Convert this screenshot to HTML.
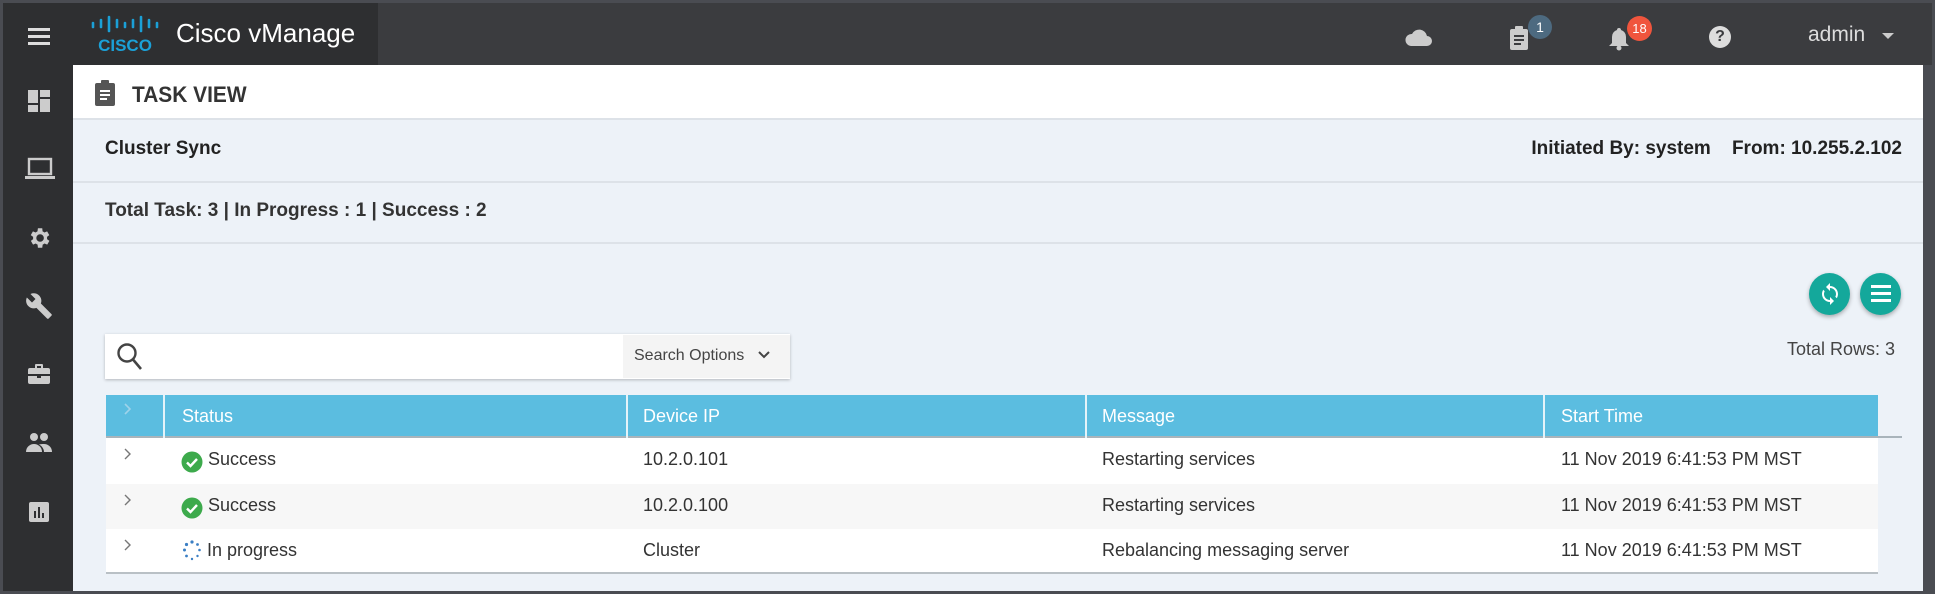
<!DOCTYPE html>
<html><head><meta charset="utf-8"><style>
*{margin:0;padding:0;box-sizing:border-box}
body{width:1935px;height:594px;background:#4a4c52;position:relative;overflow:hidden;font-family:"Liberation Sans",sans-serif;}
.abs{position:absolute}
#top{left:3px;top:3px;width:1929px;height:62px;background:#3b3c3f}
#logo{left:3px;top:3px;width:375px;height:62px;background:#2e2f31}
#side{left:3px;top:65px;width:70px;height:526px;background:#2e2f31}
#main{left:73px;top:65px;width:1850px;height:526px;background:#edf2f8}
.t{white-space:nowrap;position:absolute}
.hd{color:#fff;font-size:18px}
.cell{font-size:18px;color:#333}
</style></head><body>
<div class="abs" id="top"></div>
<div class="abs" id="logo"></div>
<div class="abs" id="side"></div>
<div class="abs" id="main"></div>
<!-- hamburger -->
<div class="abs" style="left:28px;top:28px;width:22px;height:3px;background:#ddd"></div>
<div class="abs" style="left:28px;top:35px;width:22px;height:3px;background:#ddd"></div>
<div class="abs" style="left:28px;top:42px;width:22px;height:3px;background:#ddd"></div>
<!-- cisco logo -->
<svg class="abs" style="left:90px;top:14px" width="72" height="40" viewBox="0 0 72 40">
<g stroke="#1ba0d7" stroke-width="2.6" stroke-linecap="round">
<line x1="3" y1="9" x2="3" y2="13"/><line x1="11" y1="6" x2="11" y2="13"/><line x1="19" y1="3" x2="19" y2="17"/><line x1="27" y1="6" x2="27" y2="13"/><line x1="35" y1="9" x2="35" y2="13"/><line x1="43" y1="6" x2="43" y2="13"/><line x1="51" y1="3" x2="51" y2="17"/><line x1="59" y1="6" x2="59" y2="13"/><line x1="67" y1="9" x2="67" y2="13"/></g>
<text x="35" y="37" text-anchor="middle" fill="#1ba0d7" font-family="Liberation Sans" font-weight="bold" font-size="17">CISCO</text></svg>
<div class="t" style="left:176px;top:18px;color:#fff;font-size:26px">Cisco vManage</div>
<!-- top right icons -->
<svg class="abs" style="left:1405px;top:27px" width="28" height="20" viewBox="0 0 28 20"><path d="M6 19h16a5 5 0 0 0 0-10a8 8 0 0 0-15-2a6 6 0 0 0-1 12z" fill="#ccc"/></svg>
<svg class="abs" style="left:1509px;top:26px" width="20" height="24" viewBox="0 0 20 24"><rect x="1" y="3" width="18" height="21" rx="2" fill="#ccc"/><rect x="6" y="0" width="8" height="5" rx="1" fill="#ccc"/><g fill="#3b3c3f"><rect x="5" y="9" width="10" height="2"/><rect x="5" y="13" width="10" height="2"/><rect x="5" y="17" width="7" height="2"/></g></svg>
<div class="abs" style="left:1528px;top:15px;width:24px;height:24px;border-radius:50%;background:#4d6a80;color:#fff;font-size:14px;text-align:center;line-height:24px">1</div>
<svg class="abs" style="left:1608px;top:27px" width="22" height="24" viewBox="0 0 22 24"><path d="M11 1a2 2 0 0 1 2 2a7 7 0 0 1 5 7v6l3 3H1l3-3v-6a7 7 0 0 1 5-7a2 2 0 0 1 2-2z" fill="#ccc"/><circle cx="11" cy="21" r="2.5" fill="#ccc"/></svg>
<div class="abs" style="left:1627px;top:16px;width:25px;height:25px;border-radius:50%;background:#f0553d;color:#fff;font-size:13px;text-align:center;line-height:25px">18</div>
<div class="abs" style="left:1709px;top:26px;width:22px;height:22px;border-radius:50%;background:#ddd;color:#3b3c3f;font-size:16px;font-weight:bold;text-align:center;line-height:22px">?</div>
<div class="t" style="left:1808px;top:23px;color:#ddd;font-size:21px">admin</div>
<div class="abs" style="left:1882px;top:33px;border-left:6px solid transparent;border-right:6px solid transparent;border-top:6px solid #ccc"></div>
<!-- sidebar icons -->
<svg class="abs" style="left:27px;top:89px" width="24" height="24" viewBox="0 0 24 24"><g fill="#ccc"><rect x="1" y="1" width="10" height="13"/><rect x="13" y="1" width="10" height="7"/><rect x="13" y="10" width="10" height="13"/><rect x="1" y="16" width="10" height="7"/></g></svg>
<svg class="abs" style="left:24px;top:157px" width="32" height="24" viewBox="0 0 32 24"><rect x="5" y="2" width="22" height="15" fill="none" stroke="#ccc" stroke-width="2.4"/><rect x="1" y="19" width="30" height="3" fill="#ccc"/></svg>
<svg class="abs" style="left:26px;top:225px" width="26" height="26" viewBox="0 0 24 24"><path fill="#ccc" d="M19.4 13a7.5 7.5 0 0 0 0-2l2.1-1.6-2-3.5-2.5 1a7 7 0 0 0-1.7-1L15 3h-4l-.4 2.9a7 7 0 0 0-1.7 1l-2.5-1-2 3.5L6.6 11a7.5 7.5 0 0 0 0 2l-2.1 1.6 2 3.5 2.5-1a7 7 0 0 0 1.7 1L11 21h4l.4-2.9a7 7 0 0 0 1.7-1l2.5 1 2-3.5zM13 15.5a3.5 3.5 0 1 1 0-7a3.5 3.5 0 0 1 0 7z"/></svg>
<svg class="abs" style="left:25px;top:292px" width="28" height="28" viewBox="0 0 24 24"><path fill="#ccc" d="M22.7 19l-9.1-9.1c.9-2.3.4-5-1.5-6.9-2-2-5-2.4-7.4-1.3L9 6 6 9 1.6 4.7C.4 7.1.9 10.1 2.9 12.1c1.9 1.9 4.6 2.4 6.9 1.5l9.1 9.1c.4.4 1 .4 1.4 0l2.3-2.3c.5-.4.5-1.1.1-1.4z"/></svg>
<svg class="abs" style="left:27px;top:362px" width="24" height="24" viewBox="0 0 24 24"><path fill="#ccc" d="M9 2h6a1 1 0 0 1 1 1v3h5a2 2 0 0 1 2 2v4H1V8a2 2 0 0 1 2-2h5V3a1 1 0 0 1 1-1zm1 2v2h4V4zM1 14h9v2h4v-2h9v6a2 2 0 0 1-2 2H3a2 2 0 0 1-2-2z"/></svg>
<svg class="abs" style="left:25px;top:432px" width="28" height="22" viewBox="0 0 28 22"><g fill="#ccc"><circle cx="9" cy="5" r="4"/><circle cx="19" cy="5" r="4"/><path d="M1 20c0-5 4-8 8-8s8 3 8 8z"/><path d="M14 12.5c1.5-.4 3-.5 5-.5 4 0 8 3 8 8h-8c0-3-2-6-5-7.5z"/></g></svg>
<svg class="abs" style="left:28px;top:501px" width="22" height="22" viewBox="0 0 22 22"><rect x="1" y="1" width="20" height="20" rx="2" fill="#ccc"/><g fill="#2e2f31"><rect x="6" y="10" width="2" height="7"/><rect x="10" y="6" width="2" height="11"/><rect x="14" y="12" width="2" height="5"/></g></svg>
<!-- task view header -->
<div class="abs" style="left:73px;top:65px;width:1850px;height:55px;background:#fff;border-bottom:2px solid #dde2e8"></div>
<svg class="abs" style="left:95px;top:80px" width="20" height="26" viewBox="0 0 20 26"><rect x="0" y="3" width="20" height="23" rx="2" fill="#555"/><rect x="6" y="0" width="8" height="6" rx="1" fill="#555"/><g fill="#fff"><rect x="5" y="10" width="10" height="2"/><rect x="5" y="14" width="10" height="2"/><rect x="5" y="18" width="7" height="2"/></g></svg>
<div class="t" style="left:132px;top:82px;font-size:22px;color:#333;font-weight:bold;transform:scaleX(.95);transform-origin:left">TASK VIEW</div>
<div class="abs" style="left:73px;top:181px;width:1850px;height:2px;background:#dde2e8"></div>
<div class="abs" style="left:73px;top:242px;width:1850px;height:2px;background:#dde2e8"></div>
<div class="t" style="left:105px;top:138px;font-size:19px;font-weight:bold;color:#222">Cluster Sync</div>
<div class="t" style="right:33px;top:138px;font-size:19px;font-weight:bold;color:#222">Initiated By: system &nbsp;&nbsp;&nbsp;From: 10.255.2.102</div>
<div class="t" style="left:105px;top:200px;font-size:19px;font-weight:bold;color:#333">Total Task: 3 | In Progress : 1 | Success : 2</div>
<!-- buttons -->
<div class="abs" style="left:1809px;top:273px;width:41px;height:42px;border-radius:50%;background:#14a89b;box-shadow:0 2px 4px rgba(0,0,0,.3)"></div>
<svg class="abs" style="left:1818px;top:282px" width="24" height="24" viewBox="0 0 24 24"><path fill="#fff" d="M12 4V1L8 5l4 4V6c3.3 0 6 2.7 6 6 0 1-.3 2-.7 2.8l1.5 1.5C19.5 15 20 13.6 20 12c0-4.4-3.6-8-8-8zm0 14c-3.3 0-6-2.7-6-6 0-1 .3-2 .7-2.8L5.2 7.7C4.5 9 4 10.4 4 12c0 4.4 3.6 8 8 8v3l4-4-4-4z"/></svg>
<div class="abs" style="left:1860px;top:273px;width:41px;height:42px;border-radius:50%;background:#14a89b;box-shadow:0 2px 4px rgba(0,0,0,.3)"></div>
<div class="abs" style="left:1871px;top:285px;width:20px;height:3px;background:#fff"></div>
<div class="abs" style="left:1871px;top:292px;width:20px;height:3px;background:#fff"></div>
<div class="abs" style="left:1871px;top:299px;width:20px;height:3px;background:#fff"></div>
<div class="t" style="left:1775px;top:339px;width:120px;text-align:right;font-size:18px;color:#444">Total Rows: 3</div>
<!-- search -->
<div class="abs" style="left:105px;top:334px;width:685px;height:45px;background:#fff;box-shadow:0 1px 3px rgba(0,0,0,.25)"></div>
<div class="abs" style="left:623px;top:335px;width:167px;height:43px;background:#f4f4f4"></div>
<svg class="abs" style="left:116px;top:342px" width="28" height="30" viewBox="0 0 28 30"><circle cx="11" cy="11" r="8.5" fill="none" stroke="#444" stroke-width="2.4"/><line x1="17" y1="17.5" x2="25" y2="27" stroke="#444" stroke-width="2.6"/></svg>
<div class="t" style="left:634px;top:347px;font-size:16px;color:#444">Search Options</div>
<svg class="abs" style="left:757px;top:350px" width="14" height="10" viewBox="0 0 14 10"><path d="M2 2l5 5 5-5" fill="none" stroke="#444" stroke-width="2"/></svg>
<!-- table -->
<div class="abs" style="left:106px;top:395px;width:1772px;height:43px;background:#5bbde0;border-bottom:2px solid #a9b4bb"></div>
<div class="abs" style="left:163px;top:395px;width:2px;height:43px;background:#e4f3f9"></div>
<div class="abs" style="left:626px;top:395px;width:2px;height:43px;background:#e4f3f9"></div>
<div class="abs" style="left:1085px;top:395px;width:2px;height:43px;background:#e4f3f9"></div>
<div class="abs" style="left:1543px;top:395px;width:2px;height:43px;background:#e4f3f9"></div>
<div class="abs" style="left:1878px;top:436px;width:24px;height:2px;background:#a9b4bb"></div>
<div class="t hd" style="left:182px;top:406px">Status</div>
<div class="t hd" style="left:643px;top:406px">Device IP</div>
<div class="t hd" style="left:1102px;top:406px">Message</div>
<div class="t hd" style="left:1561px;top:406px">Start Time</div>
<div class="abs" style="left:106px;top:438px;width:1772px;height:46px;background:#fff"></div>
<div class="abs" style="left:106px;top:484px;width:1772px;height:45px;background:#f7f7f7"></div>
<div class="abs" style="left:106px;top:529px;width:1772px;height:45px;background:#fff;border-bottom:2px solid #b9c0c5"></div>
<svg class="abs" style="left:123px;top:402px" width="10" height="14" viewBox="0 0 10 14"><path d="M2 2l5 5-5 5" fill="none" stroke="#9fd3ea" stroke-width="1.6"/></svg>
<svg class="abs" style="left:123px;top:447px" width="10" height="14" viewBox="0 0 10 14"><path d="M2 2l5 5-5 5" fill="none" stroke="#777" stroke-width="1.4"/></svg>
<svg class="abs" style="left:123px;top:493px" width="10" height="14" viewBox="0 0 10 14"><path d="M2 2l5 5-5 5" fill="none" stroke="#777" stroke-width="1.4"/></svg>
<svg class="abs" style="left:123px;top:538px" width="10" height="14" viewBox="0 0 10 14"><path d="M2 2l5 5-5 5" fill="none" stroke="#777" stroke-width="1.4"/></svg>
<svg class="abs" style="left:181px;top:451px" width="22" height="22" viewBox="0 0 22 22"><circle cx="11" cy="11" r="10.5" fill="#3daa4c"/><path d="M6 11.5l3.5 3.5 6.5-7" fill="none" stroke="#fff" stroke-width="2.4"/></svg>
<svg class="abs" style="left:181px;top:497px" width="22" height="22" viewBox="0 0 22 22"><circle cx="11" cy="11" r="10.5" fill="#3daa4c"/><path d="M6 11.5l3.5 3.5 6.5-7" fill="none" stroke="#fff" stroke-width="2.4"/></svg>
<svg class="abs" style="left:182px;top:540px" width="20" height="22" viewBox="0 0 20 22"><g fill="#3b7fc4"><circle cx="10" cy="2" r="1.6"/><circle cx="15.5" cy="4.5" r="1.4"/><circle cx="17.5" cy="10" r="1.3"/><circle cx="15.5" cy="16" r="1.2"/><circle cx="10" cy="19" r="1.2"/><circle cx="4.5" cy="16" r="1.4"/><circle cx="2.5" cy="10" r="1.5"/><circle cx="4.5" cy="4.5" r="1.6"/></g></svg>
<div class="t cell" style="left:208px;top:449px">Success</div>
<div class="t cell" style="left:643px;top:449px">10.2.0.101</div>
<div class="t cell" style="left:1102px;top:449px">Restarting services</div>
<div class="t cell" style="left:1561px;top:449px">11 Nov 2019 6:41:53 PM MST</div>
<div class="t cell" style="left:208px;top:495px">Success</div>
<div class="t cell" style="left:643px;top:495px">10.2.0.100</div>
<div class="t cell" style="left:1102px;top:495px">Restarting services</div>
<div class="t cell" style="left:1561px;top:495px">11 Nov 2019 6:41:53 PM MST</div>
<div class="t cell" style="left:207px;top:540px">In progress</div>
<div class="t cell" style="left:643px;top:540px">Cluster</div>
<div class="t cell" style="left:1102px;top:540px">Rebalancing messaging server</div>
<div class="t cell" style="left:1561px;top:540px">11 Nov 2019 6:41:53 PM MST</div>
</body></html>
